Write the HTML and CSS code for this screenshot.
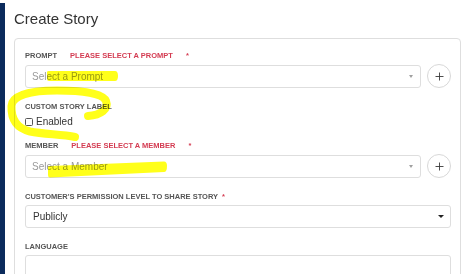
FILE: index.html
```html
<!DOCTYPE html>
<html lang="en">
<head>
<meta charset="utf-8">
<title>Create Story</title>
<link rel="stylesheet" href="styles.css">
</head>
<body>
<div class="page">
  <aside class="sidebar"></aside>
  <main class="content">
    <h1 class="title">Create Story</h1>
    <section class="card">
      <div class="field">
        <div class="label">PROMPT<span class="error">PLEASE SELECT A PROMPT</span><span class="req">*</span></div>
        <div class="row">
          <div class="select placeholder">Select a Prompt<span class="caret caret-light"></span></div>
          <button class="add" type="button"><svg viewBox="0 0 9 9" width="9" height="9"><path d="M4.5 0.5V8.5M0.5 4.5H8.5" stroke="#3a3a3a" stroke-width="0.9" fill="none"/></svg></button>
        </div>
      </div>
      <div class="field">
        <div class="label">CUSTOM STORY LABEL</div>
        <label class="check"><span class="box"></span>Enabled</label>
      </div>
      <div class="field">
        <div class="label">MEMBER<span class="error">PLEASE SELECT A MEMBER</span><span class="req">*</span></div>
        <div class="row">
          <div class="select placeholder">Select a Member<span class="caret caret-light"></span></div>
          <button class="add" type="button"><svg viewBox="0 0 9 9" width="9" height="9"><path d="M4.5 0.5V8.5M0.5 4.5H8.5" stroke="#3a3a3a" stroke-width="0.9" fill="none"/></svg></button>
        </div>
      </div>
      <div class="field">
        <div class="label">CUSTOMER'S PERMISSION LEVEL TO SHARE STORY<span class="req req-tight">*</span></div>
        <div class="select value">Publicly<span class="caret caret-dark"></span></div>
      </div>
      <div class="field">
        <div class="label">LANGUAGE</div>
        <div class="select value"></div>
      </div>
    </section>
  </main>
  <svg class="marks" viewBox="0 0 474 274" width="474" height="274">
    <path d="M47 72 Q47 71 49 71 L115 71 Q118 71 118 76 Q118 81 115 81 L49 81 Q47 81 47 79 Z" fill="#ffff1a"/>
    <path d="M48 167 Q48 166 50 166 L164 161.5 Q167 161.5 167 166 Q167 172 164 172 L50 177.5 Q48 177.5 48 175 Z" fill="#ffff1a"/>
    <path d="M88 116 C101 115 109 109 106 101 C103 93 82 90.5 57 90.5 C31 90.5 12 95 11.5 106 C11 119 16 128 30 131.5 C45 134.5 62 134 75 137" fill="none" stroke="#ffff1a" stroke-width="8" stroke-linecap="round"/>
  </svg>
</div>
</body>
</html>
```
FILE: styles.css
```css
html, body {
  margin: 0;
  padding: 0;
  background: #ffffff;
}

body {
  font-family: "Liberation Sans", Arial, sans-serif;
  color: #333333;
}

.page {
  position: relative;
  display: flex;
  width: 474px;
  height: 274px;
  overflow: hidden;
}

.sidebar {
  flex: 0 0 5px;
  margin-top: 3px;
  background: #0b2b5c;
}

.content {
  flex: 1;
  padding: 0 13px 0 9px;
}

.title {
  margin: 0;
  padding-top: 10px;
  font-size: 15px;
  line-height: 18px;
  font-weight: 400;
  color: #333333;
}

.card {
  margin-top: 10px;
  min-height: 320px;
  border: 1px solid #dedede;
  border-radius: 4px;
  padding: 12px 9px 0 10px;
}

.field {
  margin-bottom: 14px;
}

.label {
  font-size: 7.5px;
  line-height: 10px;
  font-weight: 700;
  color: #555555;
  margin-bottom: 3px;
  white-space: nowrap;
}

.error {
  color: #d43c52;
  margin-left: 13px;
}

.req {
  color: #d43c52;
  margin-left: 13px;
}

.req-tight {
  margin-left: 4px;
}

.row {
  display: flex;
  align-items: center;
  gap: 6px;
  height: 24px;
}

.select {
  flex: 1;
  box-sizing: border-box;
  height: 23px;
  display: flex;
  align-items: center;
  border: 1px solid #dedede;
  border-radius: 3px;
  background: #ffffff;
  font-size: 10px;
}

.placeholder {
  padding: 0 7px 0 6px;
  color: #9a9a9a;
}

.value {
  padding: 0 6px 0 7px;
  color: #333333;
}

.caret {
  margin-left: auto;
  width: 0;
  height: 0;
  border-left: 2.5px solid transparent;
  border-right: 2.5px solid transparent;
}

.caret-light {
  border-top: 3px solid #a0a0a0;
}

.caret-dark {
  border-left-width: 3px;
  border-right-width: 3px;
  border-top: 3.5px solid #222222;
}

.add {
  flex: 0 0 24px;
  width: 24px;
  height: 24px;
  padding: 0;
  display: flex;
  align-items: center;
  justify-content: center;
  border: 1px solid #d8d8d8;
  border-radius: 50%;
  background: #ffffff;
}

.check {
  display: flex;
  align-items: center;
  gap: 3px;
  height: 13px;
  font-size: 10px;
  color: #333333;
  margin-bottom: -1px;
}

.box {
  box-sizing: border-box;
  width: 8px;
  height: 8px;
  border: 1px solid #555555;
  border-radius: 1.5px;
}

.marks {
  position: absolute;
  left: 0;
  top: 0;
  pointer-events: none;
  mix-blend-mode: multiply;
}
```
